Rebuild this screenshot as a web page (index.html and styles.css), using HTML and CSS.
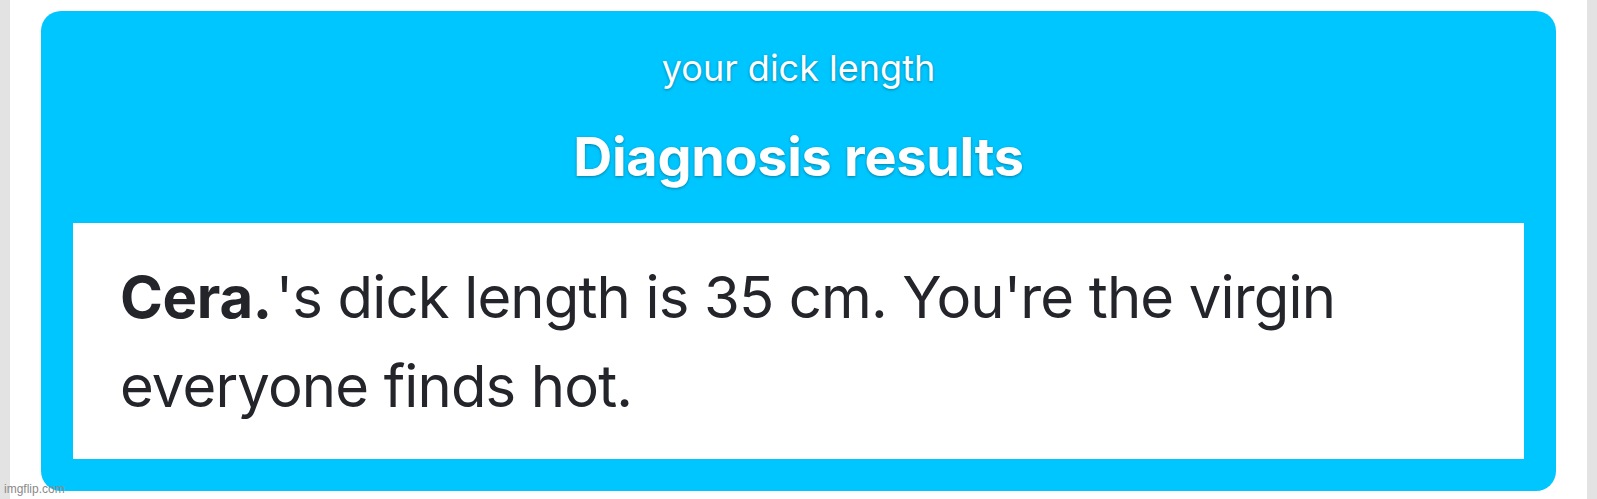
FILE: index.html
```html
<!DOCTYPE html>
<html lang="en">
    <head>
        <meta charset="UTF-8">
        <meta name="viewport" content="width=device-width, initial-scale=1.0">
        <title>Diagnosis results</title>
        <link rel="stylesheet" href="styles.css">
    </head>
<body>
    <div class="page">
        <div class="side"></div>
        <main class="content">
            <div class="result-card">
                <div class="result-head">
                    <p class="subject">your dick length</p>
                    <h1>Diagnosis results</h1>
                </div>
                <div class="result-body">
                    <p><b>Cera.</b>'s dick length is 35 cm. You're the virgin everyone finds hot.</p>
                </div>
            </div>
        </main>
        <div class="side"></div>
    </div>
    <span class="watermark">imgflip.com</span>
</body>
</html>
```

FILE: styles.css
```css
body {
    margin: 0;
    background-color: #fff;
    font-family: Inter, "Noto Sans", sans-serif;
}
.page {
    display: flex;
    height: 499px;
}
.side {
    width: 10px;
    background-color: #e3e3e3;
}
.content {
    flex: 1;
    padding: 11px 31px 8px 31px;
}
.result-card {
    background-color: #00c6ff;
    border-radius: 20px;
    height: 480px;
    box-sizing: border-box;
    padding: 0 32px 32px 32px;
    display: flex;
    flex-direction: column;
}
.result-head {
    height: 212px;
    text-align: center;
    color: #fff;
    text-shadow: 0 1px 3px rgba(0, 0, 0, 0.35);
}
.subject {
    margin: 0;
    padding-top: 37px;
    font-size: 36px;
    line-height: 40px;
}
h1 {
    margin: 0;
    margin-top: 42px;
    font-size: 54px;
    font-weight: 700;
    line-height: 54px;
    letter-spacing: -0.3px;
}
.result-body {
    flex: 1;
    background-color: #fff;
    padding: 30px 47px 0 47px;
}
.result-body p {
    margin: 0;
    color: #23252b;
    font-size: 58px;
    line-height: 89px;
    letter-spacing: -0.85px;
}
.result-body b {
    letter-spacing: -0.3px;
    margin-right: 4px;
}
.watermark {
    position: absolute;
    left: 4px;
    top: 482px;
    font-family: "Liberation Sans", Arial, sans-serif;
    font-size: 12px;
    color: #8a8a8a;
}
```
